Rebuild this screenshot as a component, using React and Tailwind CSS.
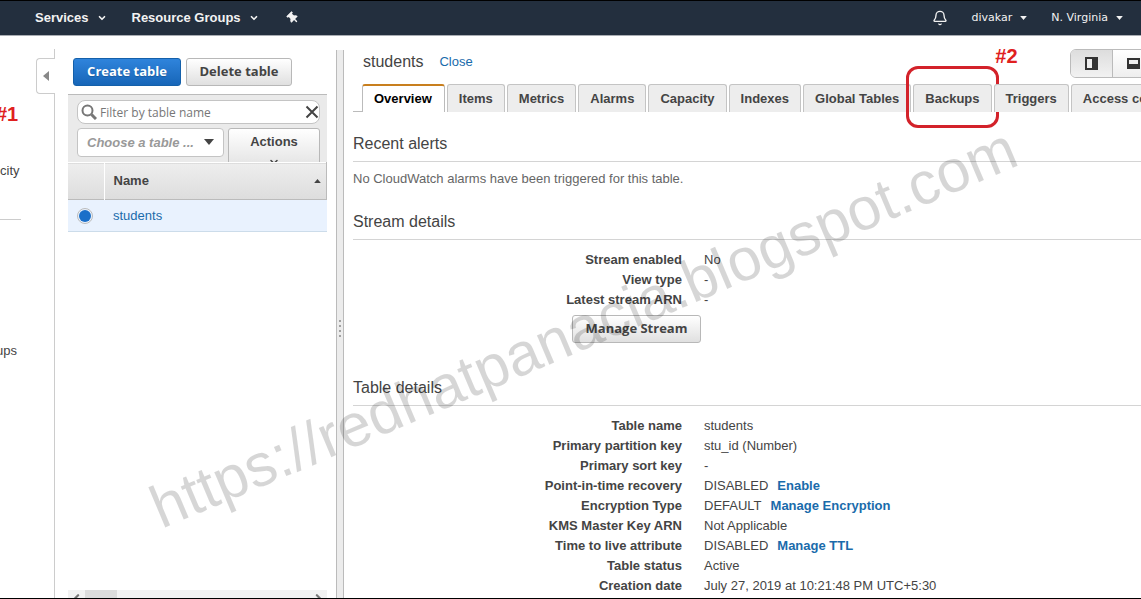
import { useState } from 'react'
import { Bell, ChevronDown, ChevronLeft, ChevronRight } from 'lucide-react'
import { FaThumbtack } from 'react-icons/fa'

const TABS = ['Overview', 'Items', 'Metrics', 'Alarms', 'Capacity', 'Indexes', 'Global Tables', 'Backups', 'Triggers', 'Access control']

const STREAM = [
  { label: 'Stream enabled', value: 'No' },
  { label: 'View type', value: '-' },
  { label: 'Latest stream ARN', value: '-' },
]

const DETAILS = [
  { label: 'Table name', value: 'students' },
  { label: 'Primary partition key', value: 'stu_id (Number)' },
  { label: 'Primary sort key', value: '-' },
  { label: 'Point-in-time recovery', value: 'DISABLED', action: 'Enable' },
  { label: 'Encryption Type', value: 'DEFAULT', action: 'Manage Encryption' },
  { label: 'KMS Master Key ARN', value: 'Not Applicable' },
  { label: 'Time to live attribute', value: 'DISABLED', action: 'Manage TTL' },
  { label: 'Table status', value: 'Active' },
  { label: 'Creation date', value: 'July 27, 2019 at 10:21:48 PM UTC+5:30' },
]

const BUTTON = "h-7 rounded-[3px] border font-['Open_Sans',sans-serif] text-[13px] font-bold"
const GREY = 'border-[#b8b8b8] bg-linear-to-b from-white to-[#e0e0e0] text-[#444]'

function Caret({ className }) {
  return (
    <svg viewBox="0 0 10 6" className={className} fill="currentColor" aria-hidden="true">
      <path d="M0 0h10L5 6z" />
    </svg>
  )
}

function TopBar() {
  return (
    <header className="flex h-[35px] shrink-0 items-center border-b border-[#a9adb3] bg-[#232f3e] pr-[18px] pl-[35px] text-[#f2f2f2]">
      <button type="button" className="flex items-center gap-2 text-[13px] font-bold">
        Services <ChevronDown className="size-[10px]" strokeWidth={4} />
      </button>
      <button type="button" className="ml-[25px] flex items-center gap-2 text-[13px] font-bold">
        Resource Groups <ChevronDown className="size-[10px]" strokeWidth={4} />
      </button>
      <button type="button" aria-label="Pin shortcuts" className="ml-7">
        <FaThumbtack className="size-3 -rotate-45" />
      </button>
      <div className="ml-auto flex items-center font-['DejaVu_Sans',sans-serif] text-[11px]">
        <button type="button" aria-label="Notifications" className="mr-6">
          <Bell className="size-4" />
        </button>
        <button type="button" className="mr-6 flex items-center gap-2">
          divakar <Caret className="h-1 w-[7px]" />
        </button>
        <button type="button" className="flex items-center gap-2">
          N. Virginia <Caret className="h-1 w-[7px]" />
        </button>
      </div>
    </header>
  )
}

function SideNav() {
  return (
    <nav className="relative mt-[13px] w-[55px] shrink-0 border-r border-[#ccc] text-[13px]">
      <button
        type="button"
        aria-label="Collapse navigation"
        className="absolute top-[9px] -right-px flex h-9 w-[19px] items-center justify-center rounded-l border border-r-0 border-[#ccc] bg-white text-[#888]"
      >
        <Caret className="h-[6px] w-[10px] rotate-90" />
      </button>
      <div className="mt-[53px] -ml-1 text-xl leading-6 font-bold text-[#e02020]">#1</div>
      <a href="#capacity" className="mt-[35px] block leading-5">city</a>
      <hr className="mt-[38px] w-[21px] border-[#ccc]" />
      <a href="#backups" className="mt-[121px] -ml-1 block leading-5">ups</a>
    </nav>
  )
}

function TableList() {
  const [filter, setFilter] = useState('')

  return (
    <section className="ml-[13px] flex w-[259px] shrink-0 flex-col">
      <div className="mt-[22px] flex gap-[5px] pl-[5px]">
        <button type="button" className={`${BUTTON} w-[108px] border-[#1460aa] bg-linear-to-b from-[#2f84dc] to-[#1766b8] text-white text-shadow-xs`}>
          Create table
        </button>
        <button type="button" className={`${BUTTON} ${GREY} w-[106px]`}>Delete table</button>
      </div>

      <div className="mt-2 h-[68px] overflow-hidden border-t border-[#bbb] bg-[#eaeaea] pt-[5px] pr-[7px] pl-[9px]">
        <div className="flex h-6 items-center rounded-lg border border-[#c4c4c4] bg-white pl-[3px]">
          <svg viewBox="0 0 16 16" className="size-4 shrink-0" fill="none" stroke="#777" aria-hidden="true">
            <circle cx="6.5" cy="6.5" r="5" strokeWidth="2" />
            <path d="m10.5 10.5 4.5 4.5" strokeWidth="3" />
          </svg>
          <input
            aria-label="Filter by table name"
            placeholder="Filter by table name"
            value={filter}
            onChange={(e) => setFilter(e.target.value)}
            className="ml-[3px] h-full min-w-0 flex-1 font-['Open_Sans',sans-serif] text-[12px] outline-none placeholder:text-[#777]"
          />
          <button type="button" aria-label="Clear filter" onClick={() => setFilter('')}>
            <svg viewBox="0 0 14 14" className="size-[14px]" stroke="#444" strokeWidth="2" aria-hidden="true">
              <path d="m1.5 1.5 11 11m0-11-11 11" />
            </svg>
          </button>
        </div>
        <div className="mt-1 flex gap-1">
          <div className="relative w-[147px]">
            <select
              aria-label="Choose a table group"
              className="h-[29px] w-full appearance-none rounded border border-[#c4c4c4] bg-white pl-[9px] text-[13px] font-bold text-[#999] italic"
            >
              <option>Choose a table ...</option>
            </select>
            <Caret className="pointer-events-none absolute top-[11px] right-[10px] h-[6px] w-[10px] text-[#444]" />
          </div>
          <button type="button" className={`${GREY} flex h-11 flex-1 flex-col items-center rounded-[3px] border pt-[3px] text-[13px] font-bold`}>
            Actions
            <ChevronDown className="mt-1 size-3" strokeWidth={3} />
          </button>
        </div>
      </div>

      <table className="w-full border-collapse text-[13px]">
        <thead>
          <tr className="h-[37px] border-t border-b border-t-white border-b-[#bbb] bg-linear-to-b from-[#eee] to-[#ddd]">
            <th className="w-9 border-r border-white" />
            <th className="border-r border-[#bbb] pr-[5px] pl-[9px] text-left font-bold">
              <div className="flex items-center justify-between">
                Name <Caret className="h-1 w-[7px] rotate-180" />
              </div>
            </th>
          </tr>
        </thead>
        <tbody>
          <tr className="h-8 border-b border-[#ccdcea] bg-[#e9f2fe]">
            <td className="pl-[9px]">
              <input
                type="radio"
                name="table"
                aria-label="students"
                defaultChecked
                className="block size-4 appearance-none rounded-full border border-[#bbb] bg-white bg-clip-content p-[1px] checked:bg-[#1a6fc9]"
              />
            </td>
            <td className="pl-[9px]">
              <a href="#students" className="text-[#1a6bab]">students</a>
            </td>
          </tr>
        </tbody>
      </table>

      <div className="mt-auto flex h-2 items-start overflow-hidden bg-[#f2f2f2] text-[#777]">
        <ChevronLeft className="mx-[2px] mt-[2px] size-[13px] shrink-0" strokeWidth={4} />
        <div className="h-4 w-8 bg-[#dcdcdc]" />
        <ChevronRight className="mt-[2px] mr-[2px] ml-auto size-[13px] shrink-0" strokeWidth={4} />
      </div>
    </section>
  )
}

function Splitter() {
  return (
    <div className="mt-[14px] ml-[9px] flex w-2 shrink-0 flex-col items-center justify-center gap-[3px] border-x border-[#bbb] bg-[#ececec] pt-2">
      {[0, 1, 2, 3].map((i) => (
        <span key={i} className="size-[2px] rounded-full bg-[#888]" />
      ))}
    </div>
  )
}

function Fields({ rows }) {
  return (
    <dl className="mt-[10px] text-[13px] leading-5">
      {rows.map(({ label, value, action }) => (
        <div key={label} className="flex whitespace-nowrap">
          <dt className="w-[329px] shrink-0 text-right font-bold">{label}</dt>
          <dd className="ml-[22px]">
            {value}
            {action && <a href="#edit" className="ml-[9px] font-bold text-[#1a6bab]">{action}</a>}
          </dd>
        </div>
      ))}
    </dl>
  )
}

function Heading({ children }) {
  return <h2 className="border-b border-[#d4d4d4] pb-[7px] text-base leading-5">{children}</h2>
}

function Tabs() {
  const [active, setActive] = useState('Overview')

  return (
    <div className="flex h-7 gap-[2px] text-[13px] font-bold whitespace-nowrap">
      <span className="-mr-[2px] w-[9px] shrink-0 border-b border-[#bbb]" />
      {TABS.map((tab) => (
        <div key={tab} className="relative shrink-0">
          <button
            type="button"
            onClick={() => setActive(tab)}
            className={
              tab === active
                ? 'h-7 rounded-t-[3px] border-x border-t-2 border-[#bbb] border-t-[#c87f1e] bg-white pr-3 pl-[11px] text-black'
                : 'h-7 rounded-t-[3px] border border-b-0 border-[#c4c4c4] bg-[#ededed] px-[11px]'
            }
          >
            {tab}
          </button>
          {tab === 'Backups' && (
            <>
              <div className="pointer-events-none absolute -inset-x-[7px] -top-[18px] h-[62px] rounded-xl border-3 border-[#d3222a]" />
              <div className="absolute -top-10 -right-[26px] text-xl leading-6 text-[#e02020]">#2</div>
            </>
          )}
        </div>
      ))}
    </div>
  )
}

function Details() {
  return (
    <main className="min-w-0 flex-1 overflow-hidden pl-[9px]">
      <div className="flex h-12 items-start">
        <h1 className="mt-[14px] ml-[10px] text-base leading-6">students</h1>
        <a href="#close" className="mt-[14px] ml-4 text-[13px] leading-6 text-[#1a6bab]">Close</a>
        <div className="mt-[13px] -mr-[13px] ml-auto flex h-[29px] overflow-hidden rounded-md border border-[#bbb]">
          <button type="button" aria-label="Split side by side" className="flex w-[41px] items-center justify-center bg-linear-to-b from-[#ddd] to-[#f2f2f2]">
            <svg viewBox="0 0 13 13" className="size-[13px]" aria-hidden="true">
              <path fill="#333" d="M0 0h13v13H0z" />
              <path fill="#eee" d="M2 2h5v9H2z" />
            </svg>
          </button>
          <button type="button" aria-label="Split top and bottom" className="flex w-[41px] items-center justify-center border-l border-[#bbb] bg-linear-to-b from-white to-[#eee]">
            <svg viewBox="0 0 13 13" className="size-[13px]" aria-hidden="true">
              <path fill="#333" d="M0 1h13v11H0z" />
              <path fill="#eee" d="M2 3h9v4H2z" />
            </svg>
          </button>
        </div>
      </div>
      <Tabs />
      <section className="mt-[22px]">
        <Heading>Recent alerts</Heading>
        <p className="mt-[7px] text-[13px] leading-5 text-[#666]">No CloudWatch alarms have been triggered for this table.</p>
      </section>
      <section className="mt-[23px]">
        <Heading>Stream details</Heading>
        <Fields rows={STREAM} />
        <button type="button" className={`${BUTTON} ${GREY} mt-[5px] ml-[219px] w-[129px]`}>Manage Stream</button>
      </section>
      <section className="mt-[35px]">
        <Heading>Table details</Heading>
        <Fields rows={DETAILS} />
      </section>
    </main>
  )
}

export default function App() {
  return (
    <div className="relative flex h-screen flex-col overflow-hidden border-y border-black bg-white font-['Liberation_Sans',Arial,sans-serif] text-[#444]">
      <TopBar />
      <div className="flex min-h-0 flex-1">
        <SideNav />
        <TableList />
        <Splitter />
        <Details />
      </div>
      <div className="pointer-events-none absolute top-[478px] left-[162px] origin-[0_51px] -rotate-[23deg] text-[60px] leading-none whitespace-nowrap text-black/16">
        https://redhatpanacia.blogspot.com
      </div>
    </div>
  )
}
